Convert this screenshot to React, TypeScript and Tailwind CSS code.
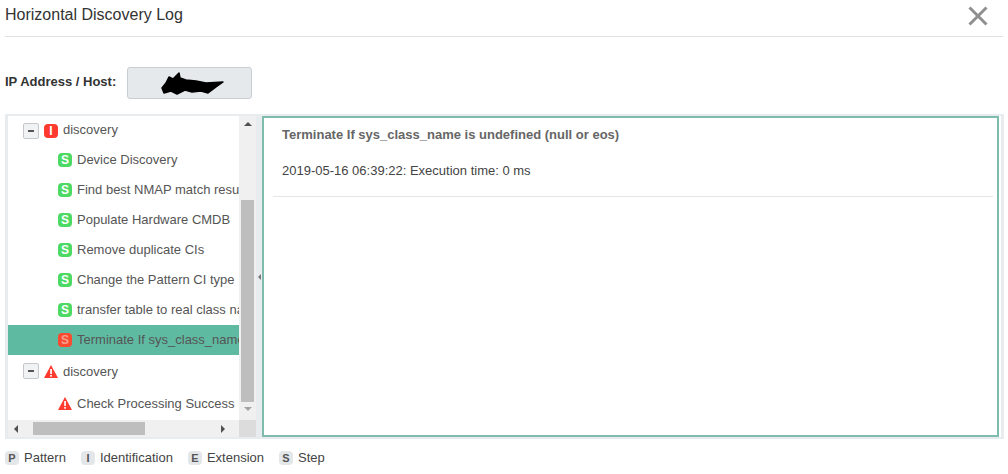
const font = 'font-["Liberation_Sans",Arial,sans-serif]'

type Mark = 'S' | 'I' | 'warn'

function Badge({ letter, color }: { letter: string; color: string }) {
  return (
    <span
      className={`flex h-[14px] w-[14px] shrink-0 items-center justify-center rounded-[4px] text-[12px] font-bold leading-none ${color}`}
    >
      {letter}
    </span>
  )
}

function Warn() {
  return (
    <svg width="14" height="13" viewBox="0 0 14 13" className="shrink-0">
      <path d="M7 0 L14 13 L0 13 Z" fill="#ff3b30" />
      <rect x="6.2" y="4" width="1.7" height="5" fill="#fff" />
      <rect x="6.2" y="10" width="1.7" height="1.7" fill="#fff" />
    </svg>
  )
}

function Expander() {
  return (
    <span className="flex h-[16px] w-[16px] shrink-0 items-center justify-center rounded-[2px] border border-[#c4c8cc] bg-[#f1f2f3]">
      <span className="h-[2px] w-[6px] bg-[#555]" />
    </span>
  )
}

function ParentRow({ mark, height, labelClass }: { mark: Mark; height: string; labelClass: string }) {
  return (
    <div className={`flex items-center whitespace-nowrap pl-[15px] ${height}`}>
      <Expander />
      <span className="ml-[5px]">
        {mark === 'warn' ? <Warn /> : <Badge letter="I" color="bg-[#ff3b30] text-white" />}
      </span>
      <span className={`ml-[5px] text-[13px] text-[#555] ${labelClass}`}>discovery</span>
    </div>
  )
}

function StepRow({ label, mark = 'S', selected = false, height = 'h-[30px]', labelClass = '' }: { label: string; mark?: Mark; selected?: boolean; height?: string; labelClass?: string }) {
  return (
    <div className={`flex items-center whitespace-nowrap pl-[50px] ${height} ${selected ? 'bg-[#5fbaa2]' : ''}`}>
      {mark === 'warn' ? (
        <Warn />
      ) : (
        <Badge letter="S" color={selected ? 'bg-[#fb4a30] text-[#f7a08f]' : 'bg-[#4cd964] text-white'} />
      )}
      <span className={`ml-[5px] text-[13px] text-[#555] ${labelClass}`}>{label}</span>
    </div>
  )
}

function LegendItem({ letter, label }: { letter: string; label: string }) {
  return (
    <div className="flex items-center">
      <span className="flex h-[14px] w-[14px] items-center justify-center rounded-[4px] bg-[#e4e7ea] text-[11px] font-bold text-[#555]">
        {letter}
      </span>
      <span className="ml-[5px] text-[13px] text-[#444]">{label}</span>
    </div>
  )
}

export default function App() {
  return (
    <div className={`h-[474px] w-[1008px] overflow-hidden bg-white ${font}`}>
      {/* Header */}
      <header className="mx-[5px] flex h-[37px] items-start justify-between border-b border-[#e2e2e2] pr-[15px]">
        <h1 className="mt-[5px] text-[16px] font-normal leading-[20px] text-[#333]">Horizontal Discovery Log</h1>
        <svg width="20" height="20" viewBox="0 0 20 20" className="mt-[6px]">
          <path d="M1.5 1.5 L18.5 18.5 M18.5 1.5 L1.5 18.5" stroke="#8f8f8f" strokeWidth="3" />
        </svg>
      </header>

      {/* Host field */}
      <div className="mx-[5px] mt-[30px] flex items-center">
        <span className="mb-[2px] text-[13px] font-bold text-[#333]">IP Address / Host:</span>
        <div className="ml-[11px] flex h-[32px] w-[125px] items-center justify-center rounded-[3px] border border-[#c9ced2] bg-[#e6e9ec] pl-[5px]">
          <svg width="64" height="23" viewBox="0 0 64 23">
            <path d="M2 16 L6 11 L9 5 L13 7 L19 1 L20 6 L26 8 L36 9 L46 11 L63 10 L56 15 L48 21 L41 19 L32 20 L25 18 L17 22 L11 19 L4 21 Z" fill="#000" stroke="#000" strokeWidth="1.5" strokeLinejoin="round" />
          </svg>
        </div>
      </div>

      {/* Main split */}
      <div className="mx-[5px] mt-[15px] flex h-[325px] w-[999px] bg-[#e9ecef] py-[2px] pl-[3px]">
        <div className="flex h-[321px] w-[248px] flex-col">
          <div className="flex min-h-0 flex-1">
            <div className="w-[231px] overflow-hidden bg-white">
              <ParentRow mark="I" height="h-[29px]" labelClass="mb-[2px]" />
              <StepRow label="Device Discovery" />
              <StepRow label="Find best NMAP match results" />
              <StepRow label="Populate Hardware CMDB" />
              <StepRow label="Remove duplicate CIs" />
              <StepRow label="Change the Pattern CI type" />
              <StepRow label="transfer table to real class name" />
              <StepRow label="Terminate If sys_class_name is undefined" selected />
              <ParentRow mark="warn" height="h-[32px]" labelClass="mt-[2px]" />
              <StepRow label="Check Processing Success" mark="warn" height="h-[32px]" labelClass="mt-[2px]" />
            </div>
            {/* Vertical scrollbar */}
            <div className="flex w-[17px] flex-col items-center bg-[#f0f0f0]">
              <div className="mt-[6px] h-0 w-0 border-x-[4px] border-b-[4px] border-x-transparent border-b-[#505050]" />
              <div className="mt-[74px] h-[202px] w-[13px] bg-[#bebebe]" />
              <div className="mt-[5px] h-0 w-0 border-x-[4px] border-t-[4px] border-x-transparent border-t-[#a3a3a3]" />
            </div>
          </div>
          {/* Horizontal scrollbar */}
          <div className="flex h-[17px] shrink-0">
            <div className="flex w-[231px] items-center bg-[#f0f0f0] pl-[6px]">
              <div className="h-0 w-0 border-y-[4px] border-r-[4px] border-y-transparent border-r-[#505050]" />
              <div className="ml-[15px] h-[13px] w-[112px] bg-[#bebebe]" />
              <div className="ml-[76px] h-0 w-0 border-y-[4px] border-l-[4px] border-y-transparent border-l-[#505050]" />
            </div>
            <div className="w-[17px] bg-[#dcdcdc]" />
          </div>
        </div>

        {/* Splitter */}
        <div className="flex w-[6px] shrink-0 items-center justify-center">
          <div className="h-0 w-0 border-y-[3px] border-r-[3px] border-y-transparent border-r-[#777]" />
        </div>

        {/* Detail panel */}
        <div className="h-[321px] w-[737px] shrink-0 border-2 border-[#7fbcae] bg-white pl-[9px] pr-[4px]">
          <div className="h-[79px] border-b border-[#e6e6e6] pl-[9px]">
            <p className="pt-[7px] text-[13px] font-bold leading-[20px] text-[#666]">Terminate If sys_class_name is undefined (null or eos)</p>
            <p className="mt-[16px] text-[13px] leading-[20px] text-[#444]">2019-05-16 06:39:22: Execution time: 0 ms</p>
          </div>
        </div>
        <div className="h-[321px] w-[2px] shrink-0 bg-white" />
      </div>

      {/* Legend */}
      <footer className="mx-[5px] mt-[9px] flex h-[20px] items-center gap-[15px]">
        <LegendItem letter="P" label="Pattern" />
        <LegendItem letter="I" label="Identification" />
        <LegendItem letter="E" label="Extension" />
        <LegendItem letter="S" label="Step" />
      </footer>
    </div>
  )
}
